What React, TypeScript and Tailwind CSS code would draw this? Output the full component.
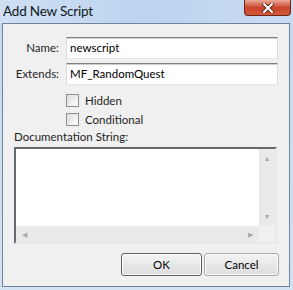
const ui = { fontFamily: 'Lato, "Segoe UI", "Noto Sans", sans-serif' };

function Field({ label, value }: { label: string; value: string }) {
  return (
    <div className="flex items-center">
      <span className="w-[63px] pr-[7px] text-right text-[11.5px] text-[#1e1e1e]">{label}</span>
      <div className="flex h-[22px] w-[212px] items-center border border-t-[#7f7f7f] border-r-[#dadada] border-b-[#e3e9ef] border-l-[#dadada] bg-white pl-[3px] text-[11.5px] text-black shadow-[inset_0_1px_0_#cfcfcf]">
        {value}
      </div>
    </div>
  );
}

function Check({ label }: { label: string }) {
  return (
    <div className="flex items-center pl-[63px]">
      <span className="h-[13px] w-[13px] border border-[#8e8f8f] bg-gradient-to-br from-[#dcdcdc] to-white" />
      <span className="ml-[6px] text-[11.5px] leading-[13px] text-[#1e1e1e]">{label}</span>
    </div>
  );
}

export default function App() {
  return (
    <div className="flex h-[290px] w-[293px] flex-col bg-gradient-to-b from-[#c5d9f1] to-[#d3e2f3]" style={ui}>
      {/* title bar */}
      <div className="flex h-[23px] shrink-0 items-start justify-between bg-gradient-to-r from-[#cfe0f4] via-[#bcd3ee] to-[#c9dcf2]">
        <span className="pl-[3px] pt-[1px] text-[13.5px] leading-[20px] tracking-[-0.2px] text-[#101820]">Add New Script</span>
        <div className="mr-[2px] flex h-[16px] w-[47px] items-center justify-center rounded-b-[4px] border border-t-0 border-[#6e2417] bg-gradient-to-b from-[#eaa996] via-[#c8432c] to-[#d2583a]">
          <svg width="12" height="10" viewBox="0 0 12 10">
            <path d="M2 1 L10 9 M10 1 L2 9" stroke="#45201a" strokeWidth="3.6" strokeLinecap="square" />
            <path d="M2 1 L10 9 M10 1 L2 9" stroke="#ffffff" strokeWidth="2" strokeLinecap="square" />
          </svg>
        </div>
      </div>

      {/* body */}
      <div className="ml-[2px] flex h-[264px] w-[288px] flex-col border border-[#6f839c] bg-[#f0f0f0] pt-[13px]">
        <div className="flex flex-col gap-[4px]">
          <Field label="Name:" value="newscript" />
          <Field label="Extends:" value="MF_RandomQuest" />
        </div>
        <div className="mt-[9px] flex flex-col gap-[6px]">
          <Check label="Hidden" />
          <Check label="Conditional" />
        </div>
        <span className="mt-[3px] pl-[11px] text-[11.5px] leading-[15px] text-[#1e1e1e]">Documentation String:</span>

        <div className="ml-[11px] mt-[3px] grid h-[97px] w-[263px] grid-cols-[1fr_16px] grid-rows-[1fr_16px] border-2 border-t-[#6a6a6a] border-r-[#e8e8e8] border-b-[#e8e8e8] border-l-[#6a6a6a] bg-white">
          <div className="bg-white" />
          <div className="flex flex-col items-center justify-between bg-[#eaeaea] py-[6px] text-[7px] leading-none text-[#a8a8a8]">
            <span>▲</span>
            <span>▼</span>
          </div>
          <div className="flex items-center justify-between bg-[#eaeaea] px-[6px] text-[7px] leading-none text-[#a8a8a8]">
            <span>◀</span>
            <span>▶</span>
          </div>
          <div className="bg-[#f0f0f0]" />
        </div>

        <div className="mt-[9px] flex justify-end gap-[2px] pr-[10px]">
          <button className="h-[23px] w-[81px] rounded-[3px] border border-[#5f5f5f] bg-gradient-to-b from-[#f4f4f4] to-[#dcdcdc] text-[11.5px] text-black shadow-[inset_0_0_0_1px_#fbfbfb]">
            OK
          </button>
          <button className="h-[23px] w-[75px] rounded-[3px] border border-[#a9a9a9] bg-gradient-to-b from-[#f4f4f4] to-[#dcdcdc] text-[11.5px] text-black shadow-[inset_0_0_0_1px_#fbfbfb]">
            Cancel
          </button>
        </div>
      </div>
    </div>
  );
}
